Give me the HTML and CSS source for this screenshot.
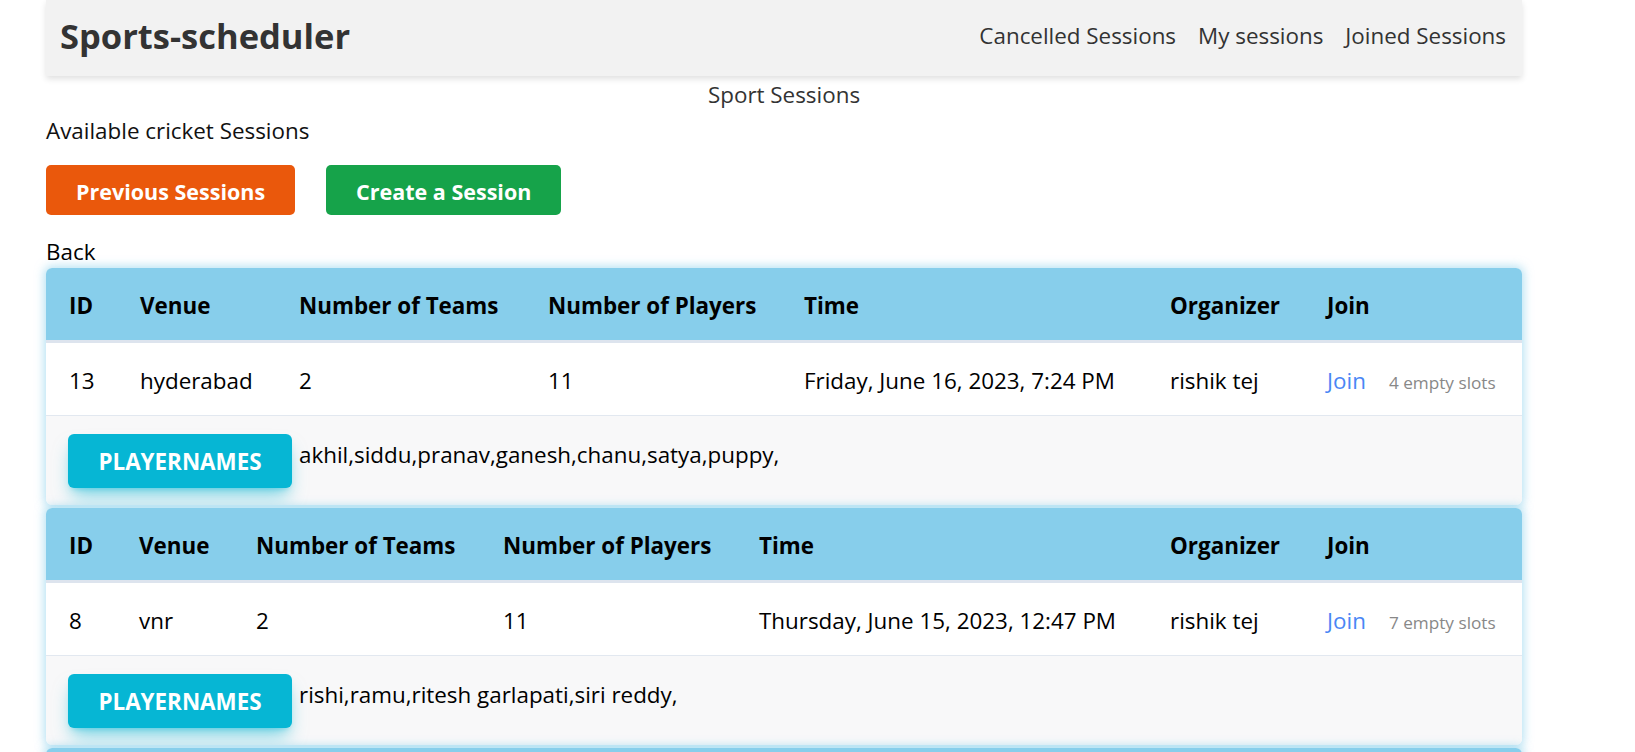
FILE: index.html
```html
<!DOCTYPE html>
<html lang="en">
<head>
<meta charset="utf-8">
<title>Sports-scheduler</title>
<link rel="stylesheet" href="styles.css">
</head>
<body>
<div class="page">
  <header class="topbar">
    <h1 class="brand">Sports-scheduler</h1>
    <nav class="nav">
      <a href="#" class="nav-link">Cancelled Sessions</a>
      <a href="#" class="nav-link">My sessions</a>
      <a href="#" class="nav-link">Joined Sessions</a>
    </nav>
  </header>

  <main class="content">
    <p class="page-title">Sport Sessions</p>
    <p class="subtitle">Available cricket Sessions</p>
    <div class="actions">
      <a href="#" class="btn btn-orange">Previous Sessions</a>
      <a href="#" class="btn btn-green">Create a Session</a>
    </div>
    <a href="#" class="back">Back</a>

    <section class="card">
      <table class="session">
        <colgroup>
          <col class="a1"><col class="a2"><col class="a3"><col class="a4"><col class="a5"><col class="a6"><col class="a7">
        </colgroup>
        <thead>
          <tr><th>ID</th><th>Venue</th><th>Number of Teams</th><th>Number of Players</th><th>Time</th><th>Organizer</th><th>Join</th></tr>
        </thead>
        <tbody>
          <tr class="main-row">
            <td>13</td><td>hyderabad</td><td>2</td><td>11</td><td>Friday, June 16, 2023, 7:24 PM</td><td>rishik tej</td>
            <td><a href="#" class="join">Join</a><span class="slots">4 empty slots</span></td>
          </tr>
          <tr class="players-row">
            <td colspan="7">
              <div class="players">
                <button class="btn-players">PLAYERNAMES</button>
                <span class="names">akhil,siddu,pranav,ganesh,chanu,satya,puppy,</span>
              </div>
            </td>
          </tr>
        </tbody>
      </table>
    </section>

    <section class="card">
      <table class="session">
        <colgroup>
          <col class="b1"><col class="b2"><col class="b3"><col class="b4"><col class="b5"><col class="b6"><col class="b7">
        </colgroup>
        <thead>
          <tr><th>ID</th><th>Venue</th><th>Number of Teams</th><th>Number of Players</th><th>Time</th><th>Organizer</th><th>Join</th></tr>
        </thead>
        <tbody>
          <tr class="main-row">
            <td>8</td><td>vnr</td><td>2</td><td>11</td><td>Thursday, June 15, 2023, 12:47 PM</td><td>rishik tej</td>
            <td><a href="#" class="join">Join</a><span class="slots">7 empty slots</span></td>
          </tr>
          <tr class="players-row">
            <td colspan="7">
              <div class="players">
                <button class="btn-players">PLAYERNAMES</button>
                <span class="names">rishi,ramu,ritesh garlapati,siri reddy,</span>
              </div>
            </td>
          </tr>
        </tbody>
      </table>
    </section>

    <section class="card">
      <table class="session">
        <colgroup>
          <col class="b1"><col class="b2"><col class="b3"><col class="b4"><col class="b5"><col class="b6"><col class="b7">
        </colgroup>
        <thead>
          <tr><th>ID</th><th>Venue</th><th>Number of Teams</th><th>Number of Players</th><th>Time</th><th>Organizer</th><th>Join</th></tr>
        </thead>
      </table>
    </section>
  </main>
</div>
</body>
</html>
```

FILE: styles.css
```css
* {
  box-sizing: border-box;
}

html, body {
  margin: 0;
  padding: 0;
  background: #ffffff;
}

body {
  font-family: "Open Sans", "Noto Sans", "DejaVu Sans", sans-serif;
  font-size: 22.4px;
  line-height: 36px;
  color: #000;
}

.page {
  width: 1476px;
  margin-left: 46px;
}

/* top bar */
.topbar {
  height: 76px;
  background: #f2f2f2;
  box-shadow: 0 3px 6px rgba(0, 0, 0, 0.12);
  display: flex;
  align-items: center;
  justify-content: space-between;
  padding: 0 16px 0 14px;
}

.brand {
  margin: -4px 0 0;
  font-size: 34.5px;
  font-weight: 700;
  color: #333;
  line-height: 40px;
}

.nav {
  display: flex;
  gap: 22px;
  margin-top: -5px;
}

.nav-link {
  color: #333;
  text-decoration: none;
  font-size: 22.4px;
}

/* content */
.page-title {
  margin: 1px 0 0;
  text-align: center;
  color: #333;
}

.subtitle {
  margin: 0;
  color: #111;
}

.actions {
  display: flex;
  gap: 31px;
  margin-top: 16px;
}

.btn {
  display: inline-block;
  height: 50px;
  line-height: 53px;
  padding: 0 30px;
  border-radius: 5px;
  color: #fff;
  font-weight: 700;
  text-decoration: none;
  font-size: 21.5px;
  overflow: hidden;
}

.btn-orange {
  background: #ea580c;
}

.btn-green {
  background: #16a34a;
}

.back {
  display: block;
  margin-top: 17px;
  padding-top: 2px;
  height: 36px;
  line-height: 36px;
  color: #000;
  text-decoration: none;
}

/* session cards */
.card {
  border-radius: 6px;
  overflow: hidden;
  box-shadow: 0 0 10px 2px rgba(135, 206, 235, 0.6);
  margin-bottom: 3px;
  background: #fff;
}

.session {
  width: 100%;
  border-collapse: collapse;
  table-layout: fixed;
}

.session th,
.session td {
  padding: 20px 23px 16px;
  text-align: left;
  white-space: nowrap;
  vertical-align: middle;
}

.session thead th {
  background: #87ceeb;
  font-weight: 700;
  color: #000;
  border-bottom: 3px solid #dde4ee;
}

.main-row td {
  background: #fff;
  border-bottom: 1px solid #e2e8f0;
}

.players-row td {
  background: #f8f8f9;
  padding: 18px 22px 17px;
}

.players {
  display: flex;
  align-items: flex-start;
  gap: 7px;
}

.btn-players {
  height: 54px;
  width: 224px;
  padding: 0;
  border: 0;
  border-radius: 6px;
  background: #06b6d4;
  color: #fff;
  font-family: inherit;
  font-size: 22.4px;
  font-weight: 700;
  box-shadow: 0 12px 18px -4px rgba(6, 182, 212, 0.5), 0 4px 6px -4px rgba(6, 182, 212, 0.5);
}

.names {
  line-height: 30px;
  margin-top: 6px;
}

.join {
  color: #4a86f5;
  text-decoration: none;
}

.slots {
  margin-left: 23px;
  color: #888;
  font-size: 17.2px;
  line-height: 20px;
}

/* column widths: first card */
.a1 { width: 71px; }
.a2 { width: 159px; }
.a3 { width: 249px; }
.a4 { width: 256px; }
.a5 { width: 366px; }
.a6 { width: 157px; }
.a7 { width: 218px; }

/* column widths: following cards */
.b1 { width: 70px; }
.b2 { width: 117px; }
.b3 { width: 247px; }
.b4 { width: 256px; }
.b5 { width: 411px; }
.b6 { width: 157px; }
.b7 { width: 218px; }
```
